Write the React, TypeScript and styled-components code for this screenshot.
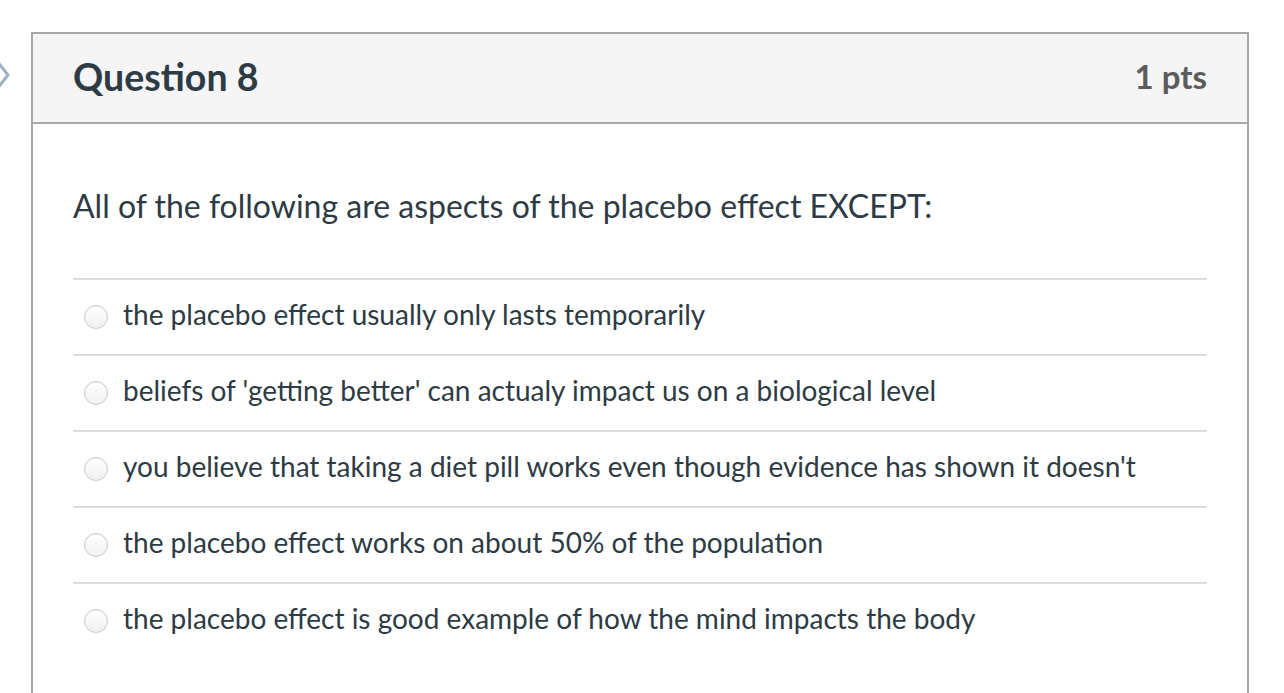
import React from 'react';
import styled, { createGlobalStyle } from 'styled-components';

const GlobalStyle = createGlobalStyle`
  html, body {
    margin: 0;
    padding: 0;
    background: #fff;
    overflow: hidden;
  }

  body {
    font-family: Lato, "Liberation Sans", sans-serif;
    color: #2d3b45;
  }
`;

const Page = styled.div`
  display: flex;
  align-items: flex-start;
  padding-top: 32px;
  height: 661px;
`;

const Gutter = styled.div`
  width: 31px;
  flex-shrink: 0;
  padding-top: 26px;

  svg {
    display: block;
    margin-left: -6px;
  }
`;

const Card = styled.section`
  width: 1214px;
  height: 700px;
  border: 2px solid #a8a8a8;
  border-bottom: 0 none;
`;

const Header = styled.header`
  display: flex;
  align-items: center;
  justify-content: space-between;
  height: 84px;
  padding: 0 40px 4px;
  background: #f5f5f5;
  border-bottom: 2px solid #a8a8a8;
`;

const Title = styled.h2`
  margin: 0;
  font-size: 37.5px;
  font-weight: 700;
  color: #2d3b45;
`;

const Points = styled.span`
  font-size: 33px;
  font-weight: 700;
  color: #5b5b5b;
`;

const Body = styled.div`
  padding: 0 40px;
`;

const QuestionText = styled.p`
  margin: 0;
  padding: 61px 0 51px;
  font-size: 32px;
  line-height: 42px;
`;

const Answers = styled.ul`
  list-style: none;
  margin: 0;
  padding: 0;
`;

const Answer = styled.li`
  display: flex;
  align-items: center;
  gap: 15px;
  height: 74px;
  border-top: 2px solid #dcdcdc;
  font-size: 28px;
`;

const Radio = styled.span`
  width: 22px;
  height: 22px;
  margin-left: 11px;
  border-radius: 50%;
  border: 1px solid #c8c8c8;
  background: linear-gradient(#ffffff, #f1f1f1);
  box-shadow: inset 0 1px 1px rgba(0, 0, 0, 0.04);
  flex-shrink: 0;
`;

const AnswerText = styled.span`
  line-height: 32px;
  margin-bottom: 7px;
`;

const answers = [
  'the placebo effect usually only lasts temporarily',
  "beliefs of 'getting better' can actualy impact us on a biological level",
  "you believe that taking a diet pill works even though evidence has shown it doesn't",
  'the placebo effect works on about 50% of the population',
  'the placebo effect is good example of how the mind impacts the body',
];

const App = () => (
  <>
    <GlobalStyle />
    <Page>
      <Gutter>
        <svg width="18" height="34" viewBox="0 0 18 34" fill="none">
          <path d="M3 3 L14 17 L3 31" stroke="#9bb0c2" strokeWidth="3" strokeLinecap="round" strokeLinejoin="round" />
        </svg>
      </Gutter>
      <Card>
        <Header>
          <Title>Question 8</Title>
          <Points>1 pts</Points>
        </Header>
        <Body>
          <QuestionText>All of the following are aspects of the placebo effect EXCEPT:</QuestionText>
          <Answers>
            {answers.map((text) => (
              <Answer key={text}>
                <Radio />
                <AnswerText>{text}</AnswerText>
              </Answer>
            ))}
          </Answers>
        </Body>
      </Card>
    </Page>
  </>
);

export default App;
